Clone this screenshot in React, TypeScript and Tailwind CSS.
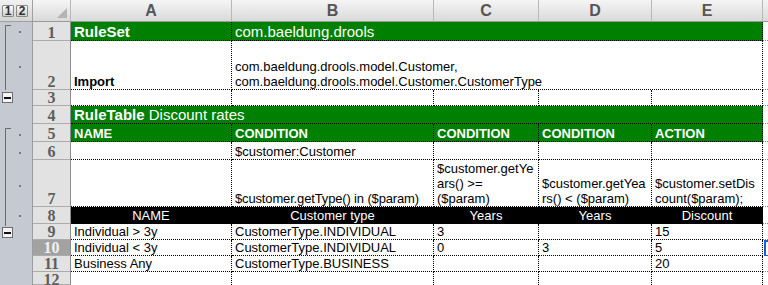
import React from "react"

// sheet geometry, measured from the screenshot
const COLS = "grid-cols-[38px_161px_202px_105px_113px_111px_1fr]"
const ROWS =
  "grid-rows-[22px_19px_49px_16px_18px_18px_18px_47px_17px_16px_16px_16px_13px]"

const Level = ({ n }: { n: string }) => (
  <div className="flex h-[12px] w-[12px] items-center justify-center rounded-[1px] border border-[#8a8a8a] bg-gradient-to-b from-[#fafafa] to-[#cfcfcf] text-[12px] font-bold leading-none text-[#333]">
    {n}
  </div>
)

const MinusBox = ({ y }: { y: number }) => (
  <g>
    <rect x="2.5" y={y + 0.5} width="10" height="10" fill="#f4f4f4" stroke="#6c6c6c" />
    <rect x="4" y={y + 5} width="7" height="2" fill="#111" />
  </g>
)

const Outline = () => (
  <div className="flex w-[33px] shrink-0 flex-col">
    <div className="flex h-[22px] items-center gap-[2px] border-b border-r border-[#a0a0a0] bg-gradient-to-b from-[#f2f2f2] to-[#d4d4d4] pl-[2px]">
      <Level n="1" />
      <Level n="2" />
    </div>
    <div className="flex-1 border-r border-[#9a9ca3] bg-[#c4c9d2]">
      <svg width="32" height="263" className="block">
        {/* group 1: rows 1-2 */}
        <path d="M11 3.5H5.5V68" fill="none" stroke="#6a6a6a" />
        <rect x="19" y="9" width="2" height="2" fill="#7a7a7a" />
        <rect x="19" y="44" width="2" height="2" fill="#7a7a7a" />
        <MinusBox y={70} />
        {/* group 2: rows 5-8 */}
        <path d="M11 106.5H5.5V204" fill="none" stroke="#6a6a6a" />
        <rect x="19" y="112" width="2" height="2" fill="#7a7a7a" />
        <rect x="19" y="130" width="2" height="2" fill="#7a7a7a" />
        <rect x="19" y="163" width="2" height="2" fill="#7a7a7a" />
        <rect x="19" y="193" width="2" height="2" fill="#7a7a7a" />
        <MinusBox y={205} />
      </svg>
    </div>
  </div>
)

const ColHead = ({ children }: { children?: React.ReactNode }) => (
  <div className="flex items-center justify-center border-b border-r border-b-[#9a9a9a] border-r-[#b8b8b8] bg-gradient-to-b from-[#f5f5f5] to-[#dadada] text-[16px] font-bold text-[#555]">
    {children}
  </div>
)

const RowHead = ({ n, selected, top }: { n: number; selected?: boolean; top?: boolean }) => (
  <div
    className={
      "flex justify-center border-b border-r border-b-[#ababab] border-r-[#8c8c8c] font-['Liberation_Serif',serif] text-[16px] font-bold leading-[15px] " +
      (top ? "items-start " : "items-end ") +
      (selected ? "bg-[#a2a2a2] text-[#f0f0f0]" : "bg-[#e2e2e2] text-[#5e5e5e]")
    }
  >
    {n}
  </div>
)

interface CellProps {
  children?: React.ReactNode
  className?: string
}

const Cell = ({ children, className = "" }: CellProps) => (
  <div
    className={
      "flex items-end overflow-visible whitespace-nowrap border-b border-r border-dotted border-black px-[3px] leading-[15px] " +
      className
    }
  >
    {children}
  </div>
)

const Lines = ({ lines }: { lines: string[] }) => (
  <div className="flex flex-col">
    {lines.map((l) => (
      <span key={l}>{l}</span>
    ))}
  </div>
)

const Edge = ({ className = "" }: { className?: string }) => (
  <div className={"border-b border-dotted border-[#888] " + className} />
)

const green = "bg-[#008000] text-white"
const black = "bg-black text-white justify-center"

export default function App() {
  return (
    <div className="flex h-[285px] w-[768px] overflow-hidden bg-white font-['Liberation_Sans',Arial,sans-serif] text-[13px] text-black">
      <Outline />
      <div className={"grid flex-1 " + COLS + " " + ROWS}>
        {/* column letters */}
        <div className="relative border-b border-r border-b-[#9a9a9a] border-r-[#b8b8b8] bg-gradient-to-b from-[#f5f5f5] to-[#dadada]">
          <svg width="12" height="12" className="absolute bottom-[2px] right-[2px]">
            <polygon points="11,1 11,11 1,11" fill="#b4b4b4" />
          </svg>
        </div>
        <ColHead>A</ColHead>
        <ColHead>B</ColHead>
        <ColHead>C</ColHead>
        <ColHead>D</ColHead>
        <ColHead>E</ColHead>
        <div className="border-b border-[#9a9a9a] bg-gradient-to-b from-[#f5f5f5] to-[#dadada]" />

        {/* 1 */}
        <RowHead n={1} />
        <Cell className={green + " text-[15px] font-bold leading-[17px]"}>RuleSet</Cell>
        <Cell className={green + " col-span-4 text-[15px] leading-[17px]"}>com.baeldung.drools</Cell>
        <Edge />

        {/* 2 */}
        <RowHead n={2} />
        <Cell className="font-bold">Import</Cell>
        <Cell className="col-span-4">
          <Lines
            lines={[
              "com.baeldung.drools.model.Customer,",
              "com.baeldung.drools.model.Customer.CustomerType",
            ]}
          />
        </Cell>
        <Edge />

        {/* 3 */}
        <RowHead n={3} />
        <Cell />
        <Cell />
        <Cell />
        <Cell />
        <Cell />
        <Edge />

        {/* 4 */}
        <RowHead n={4} />
        <Cell className={green + " col-span-5 text-[15px] leading-[17px]"}>
          <span className="font-bold">RuleTable</span>&nbsp;Discount rates
        </Cell>
        <Edge />

        {/* 5 */}
        <RowHead n={5} />
        <Cell className={green + " font-bold"}>NAME</Cell>
        <Cell className={green + " font-bold"}>CONDITION</Cell>
        <Cell className={green + " font-bold"}>CONDITION</Cell>
        <Cell className={green + " font-bold"}>CONDITION</Cell>
        <Cell className={green + " font-bold"}>ACTION</Cell>
        <Edge />

        {/* 6 */}
        <RowHead n={6} />
        <Cell />
        <Cell>$customer:Customer</Cell>
        <Cell />
        <Cell />
        <Cell />
        <Edge />

        {/* 7 */}
        <RowHead n={7} />
        <Cell />
        <Cell className="tracking-[-0.15px]">$customer.getType() in ($param)</Cell>
        <Cell>
          <Lines lines={["$customer.getYe", "ars() >=", "($param)"]} />
        </Cell>
        <Cell>
          <Lines lines={["$customer.getYea", "rs() < ($param)"]} />
        </Cell>
        <Cell>
          <Lines lines={["$customer.setDis", "count($param);"]} />
        </Cell>
        <Edge />

        {/* 8 */}
        <RowHead n={8} />
        <Cell className={black}>NAME</Cell>
        <Cell className={black}>Customer type</Cell>
        <Cell className={black}>Years</Cell>
        <Cell className={black}>Years</Cell>
        <Cell className={black}>Discount</Cell>
        <Edge />

        {/* 9 */}
        <RowHead n={9} />
        <Cell>Individual &gt; 3y</Cell>
        <Cell>CustomerType.INDIVIDUAL</Cell>
        <Cell>3</Cell>
        <Cell />
        <Cell>15</Cell>
        <Edge />

        {/* 10 */}
        <RowHead n={10} selected />
        <Cell>Individual &lt; 3y</Cell>
        <Cell>CustomerType.INDIVIDUAL</Cell>
        <Cell>0</Cell>
        <Cell>3</Cell>
        <Cell>5</Cell>
        <Edge className="ml-[1px] border-l-2 border-t-2 border-solid border-l-[#1f5fd6] border-t-[#1f5fd6] border-b-[#1f5fd6]" />

        {/* 11 */}
        <RowHead n={11} />
        <Cell>Business Any</Cell>
        <Cell>CustomerType.BUSINESS</Cell>
        <Cell />
        <Cell />
        <Cell>20</Cell>
        <Edge />

        {/* 12 */}
        <RowHead n={12} top />
        <Cell className="border-b-0" />
        <Cell className="border-b-0" />
        <Cell className="border-b-0" />
        <Cell className="border-b-0" />
        <Cell className="border-b-0" />
        <div />
      </div>
    </div>
  )
}
